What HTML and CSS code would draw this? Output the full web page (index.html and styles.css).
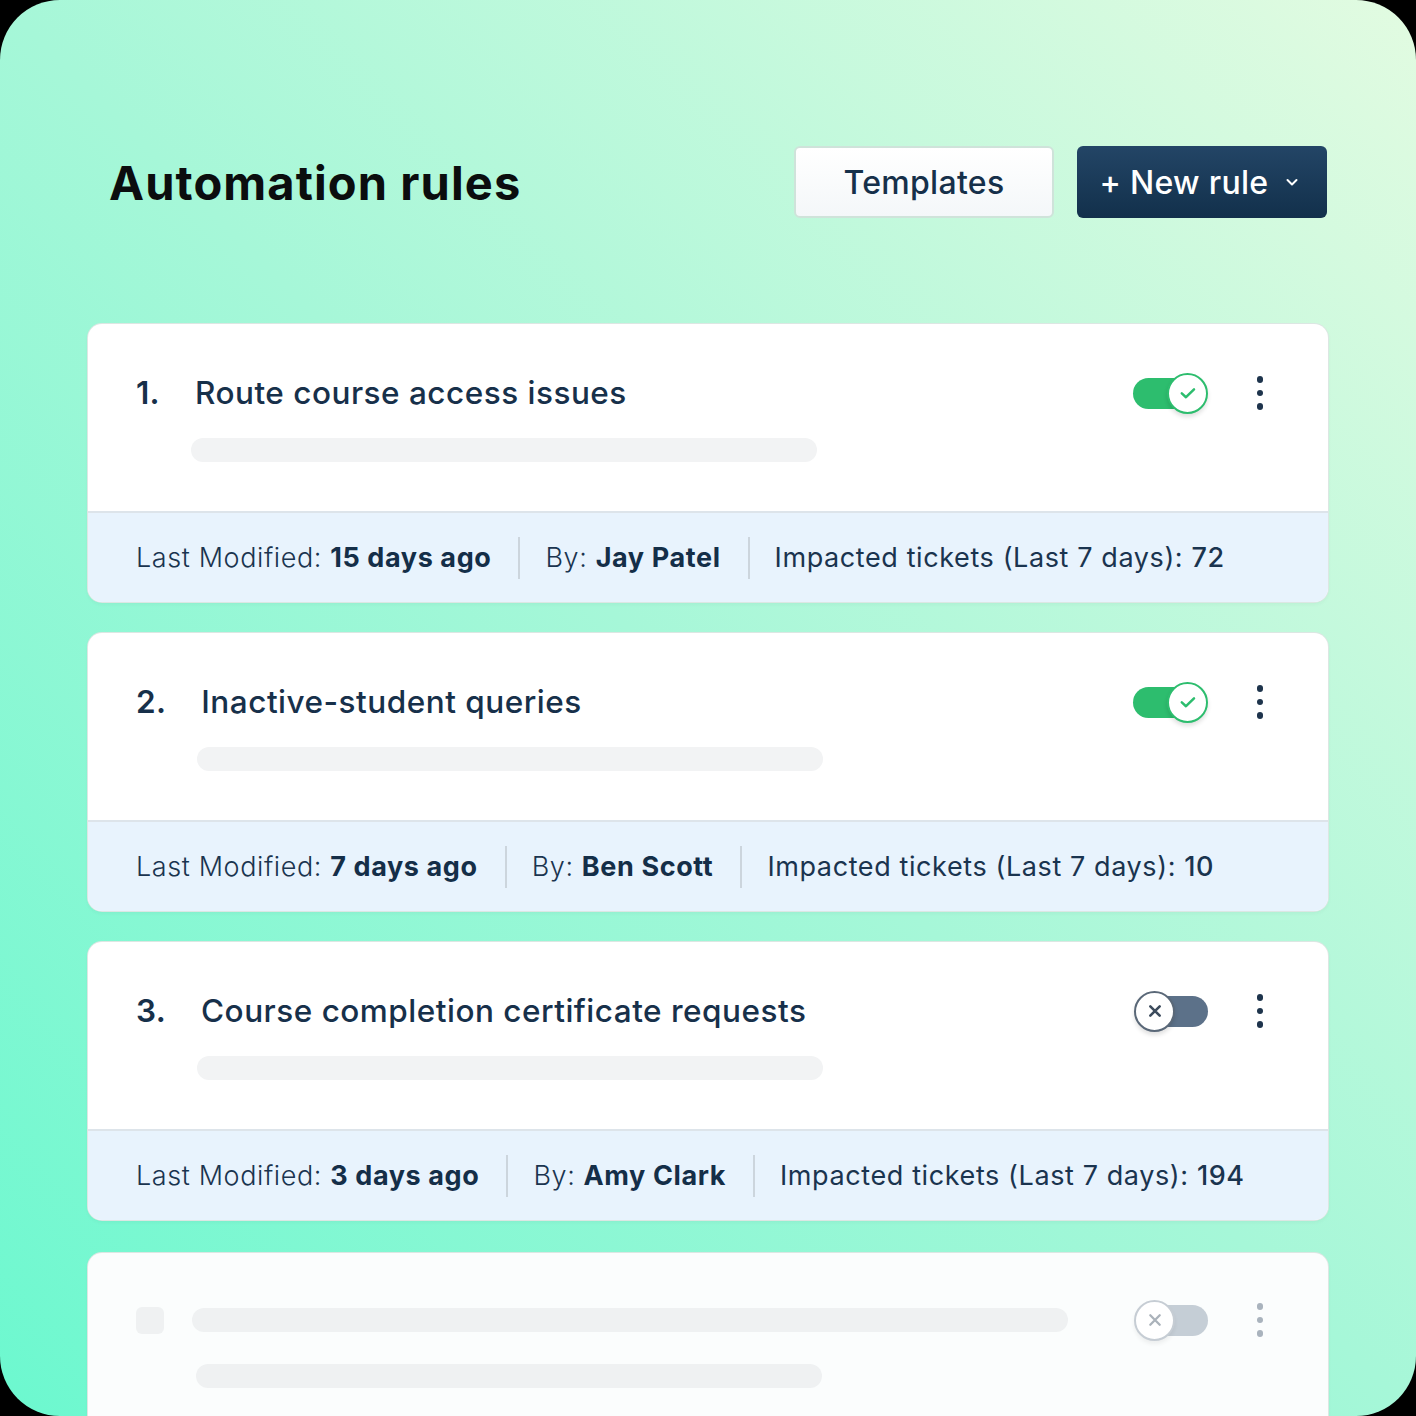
FILE: index.html
```html
<!DOCTYPE html>
<html lang="en">
<head>
<meta charset="utf-8">
<title>Automation rules</title>
<link rel="stylesheet" href="styles.css">
</head>
<body>
<div class="panel">
  <header class="header">
    <h1 class="page-title">Automation rules</h1>
    <div class="actions">
      <button class="btn btn-light">Templates</button>
      <button class="btn btn-dark">+ New rule
        <svg class="chev" width="16" height="16" viewBox="0 0 16 16"><path d="M3.5 6 L8 10.5 L12.5 6" fill="none" stroke="#fff" stroke-width="2" stroke-linecap="round" stroke-linejoin="round"/></svg>
      </button>
    </div>
  </header>

  <div class="cards">
    <div class="card">
      <div class="card-main">
        <div class="rule-head">
          <span class="num">1.</span>
          <span class="rule-title">Route course access issues</span>
          <div class="controls">
            <div class="toggle on"><span class="track"></span><span class="knob"><svg width="22" height="22" viewBox="0 0 22 22"><path d="M4.8 11.4 L9 15.2 L17 7.4" fill="none" stroke="#2dbd6e" stroke-width="2.5" stroke-linecap="round" stroke-linejoin="round"/></svg></span></div>
            <div class="kebab"><i></i><i></i><i></i></div>
          </div>
          <span></span>
          <div class="skel"></div>
        </div>
      </div>
      <div class="card-foot">
        <span class="meta"><span class="lbl">Last Modified:</span> <b>15 days ago</b></span>
        <span class="sep"></span>
        <span class="meta"><span class="lbl">By:</span> <b>Jay Patel</b></span>
        <span class="sep"></span>
        <span class="meta"><span class="lbl2">Impacted tickets (Last 7 days):</span> <span class="val">72</span></span>
      </div>
    </div>

    <div class="card">
      <div class="card-main">
        <div class="rule-head">
          <span class="num">2.</span>
          <span class="rule-title">Inactive-student queries</span>
          <div class="controls">
            <div class="toggle on"><span class="track"></span><span class="knob"><svg width="22" height="22" viewBox="0 0 22 22"><path d="M4.8 11.4 L9 15.2 L17 7.4" fill="none" stroke="#2dbd6e" stroke-width="2.5" stroke-linecap="round" stroke-linejoin="round"/></svg></span></div>
            <div class="kebab"><i></i><i></i><i></i></div>
          </div>
          <span></span>
          <div class="skel"></div>
        </div>
      </div>
      <div class="card-foot">
        <span class="meta"><span class="lbl">Last Modified:</span> <b>7 days ago</b></span>
        <span class="sep"></span>
        <span class="meta"><span class="lbl">By:</span> <b>Ben Scott</b></span>
        <span class="sep"></span>
        <span class="meta"><span class="lbl2">Impacted tickets (Last 7 days):</span> <span class="val">10</span></span>
      </div>
    </div>

    <div class="card">
      <div class="card-main">
        <div class="rule-head">
          <span class="num">3.</span>
          <span class="rule-title">Course completion certificate requests</span>
          <div class="controls">
            <div class="toggle off"><span class="track"></span><span class="knob"><svg width="22" height="22" viewBox="0 0 22 22"><path d="M6.3 6.3 L15.7 15.7 M15.7 6.3 L6.3 15.7" fill="none" stroke="#3d4c5d" stroke-width="2.6" stroke-linecap="round"/></svg></span></div>
            <div class="kebab"><i></i><i></i><i></i></div>
          </div>
          <span></span>
          <div class="skel"></div>
        </div>
      </div>
      <div class="card-foot">
        <span class="meta"><span class="lbl">Last Modified:</span> <b>3 days ago</b></span>
        <span class="sep"></span>
        <span class="meta"><span class="lbl">By:</span> <b>Amy Clark</b></span>
        <span class="sep"></span>
        <span class="meta"><span class="lbl2">Impacted tickets (Last 7 days):</span> <span class="val">194</span></span>
      </div>
    </div>

    <div class="card ghost">
      <div class="card-main">
        <div class="ghost-head">
          <span class="sq"></span>
          <span class="skel wide"></span>
          <div class="controls">
            <div class="toggle off dim"><span class="track"></span><span class="knob"><svg width="22" height="22" viewBox="0 0 22 22"><path d="M6.3 6.3 L15.7 15.7 M15.7 6.3 L6.3 15.7" fill="none" stroke="#aab2ba" stroke-width="2.3" stroke-linecap="round"/></svg></span></div>
            <div class="kebab dim"><i></i><i></i><i></i></div>
          </div>
        </div>
        <div class="skel ghost-skel"></div>
      </div>
    </div>
  </div>
</div>
</body>
</html>
```

FILE: styles.css
```css
* { box-sizing: border-box; }
html, body { margin: 0; padding: 0; background: #000; }
body { font-family: Inter, "Noto Sans", sans-serif; }

.panel {
  width: 1416px;
  height: 1416px;
  border-radius: 60px;
  overflow: hidden;
  background: linear-gradient(45deg, #6cf8cf 0%, #a6f7d8 50%, #e2fbe1 100%);
  padding: 146px 88px 0 88px;
}

.header {
  display: flex;
  align-items: center;
  justify-content: space-between;
  height: 72px;
  margin-bottom: 106px;
}
.page-title {
  margin: 0;
  padding-left: 21px;
  font-size: 47px;
  font-weight: 700;
  color: #0b0d0e;
  letter-spacing: 1.1px;
}
.actions { display: flex; gap: 23px; margin-right: 1px; }
.btn {
  height: 72px;
  border-radius: 6px;
  font-family: Inter, "Noto Sans", sans-serif;
  font-size: 32px;
  font-weight: 500;
  letter-spacing: 0.3px;
  display: flex;
  align-items: center;
  justify-content: center;
  cursor: pointer;
}
.btn-light {
  width: 260px;
  background: linear-gradient(#ffffff, #f4f7f9);
  border: 2px solid #cfe3da;
  color: #16304a;
}
.btn-dark {
  width: 250px;
  background: linear-gradient(#234566, #12304b);
  border: none;
  color: #fff;
  gap: 10px;
  padding-left: 2px;
}
.chev { margin-left: 6px; }

.cards { display: flex; flex-direction: column; gap: 31px; }
.card {
  background: #fff;
  border-radius: 14px;
  overflow: hidden;
  box-shadow: 0 0 0 1px #dce7e3, 0 2px 4px rgba(20, 60, 50, 0.05);
}
.card-main { padding: 44px 64px 49px 48px; }
.rule-head {
  display: grid;
  grid-template-columns: auto 1fr auto;
  column-gap: 35px;
  align-items: center;
}
.num, .rule-title {
  font-size: 31.5px;
  font-weight: 500;
  color: #17304a;
  line-height: 50px;
  letter-spacing: 0.5px;
}
.num { font-weight: 600; letter-spacing: 0.3px; }
.controls { display: flex; align-items: center; gap: 48px; }
.skel {
  height: 24px;
  width: 626px;
  border-radius: 12px;
  background: #f2f3f4;
  margin-top: 20px;
  margin-left: -4px;
}

.toggle { position: relative; width: 75px; height: 41px; }
.toggle .track {
  position: absolute;
  top: 5px;
  height: 31px;
  width: 66px;
  border-radius: 16px;
}
.toggle .knob {
  position: absolute;
  top: 0;
  width: 41px;
  height: 41px;
  border-radius: 50%;
  background: #fff;
  display: flex;
  align-items: center;
  justify-content: center;
  box-shadow: 0 3px 4px rgba(0, 0, 0, 0.12);
}
.toggle.on .track { left: 0; background: #2dbd6e; }
.toggle.on .knob { right: 0; border: 2px solid #2dbd6e; }
.toggle.off .track { right: 0; background: #5c7189; }
.toggle.off .knob { left: 1px; border: 2px solid #5a6878; }
.toggle.off.dim .track { background: #c5ced6; }
.toggle.off.dim .knob { border-color: #c6cdd4; box-shadow: 0 3px 4px rgba(0, 0, 0, 0.06); }

.kebab { display: flex; flex-direction: column; gap: 7px; width: 8px; align-items: center; }
.kebab i { width: 6.5px; height: 6.5px; border-radius: 50%; background: #1e344c; display: block; }
.kebab.dim i { background: #a9b3bd; }

.card-foot {
  height: 91px;
  background: #e8f3fd;
  border-top: 2px solid #dde4ea;
  display: flex;
  align-items: center;
  padding-left: 48px;
  font-size: 27px;
  letter-spacing: 0.6px;
  color: #1a344f;
}
.meta { white-space: nowrap; }
.lbl { font-weight: 300; }
.lbl2 { font-weight: 400; }
.meta b { font-weight: 700; color: #142e48; }
.val { font-weight: 500; }
.sep {
  width: 2px;
  height: 42px;
  background: #ccd5dd;
  margin: 0 25px 0 27px;
}

.ghost { background: #fbfdfd; height: 200px; margin-top: 2px; }
.ghost .card-main { padding-top: 42px; }
.ghost-head { display: flex; align-items: center; height: 50px; }
.sq { width: 28px; height: 27px; border-radius: 6px; background: #eff1f2; margin-right: 28px; }
.skel.wide { width: 876px; margin: 0; flex: none; background: #eff1f2; }
.ghost .controls { margin-left: auto; }
.ghost-skel { margin-left: 60px; margin-top: 19px; background: #eff1f2; }
```
